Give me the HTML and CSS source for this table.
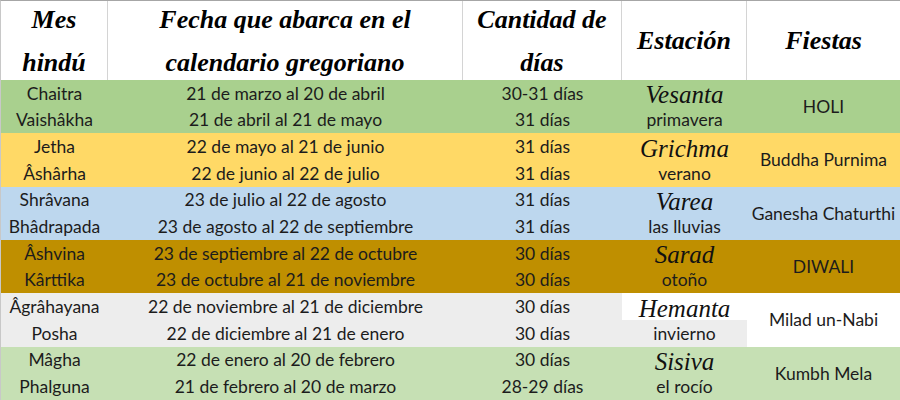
FILE: index.html
```html
<!DOCTYPE html>
<html lang="es">
<head>
<meta charset="utf-8">
<title>Calendario hindú</title>
<link rel="stylesheet" href="styles.css">
</head>
<body>
<div class="table">
  <div class="h">Mes<br>hindú</div>
  <div class="h">Fecha que abarca en el<br>calendario gregoriano</div>
  <div class="h">Cantidad de<br>días</div>
  <div class="h">Estación</div>
  <div class="h last">Fiestas</div>

  <div class="c g1">Chaitra</div><div class="c g1">21 de marzo al 20 de abril</div><div class="c g1">30-31 días</div><div class="c g1 s">Vesanta</div><div class="c g1 f">HOLI</div>
  <div class="c g1">Vaishâkha</div><div class="c g1">21 de abril al 21 de mayo</div><div class="c g1">31 días</div><div class="c g1 sub">primavera</div>

  <div class="c g2">Jetha</div><div class="c g2">22 de mayo al 21 de junio</div><div class="c g2">31 días</div><div class="c g2 s">Grichma</div><div class="c g2 f">Buddha Purnima</div>
  <div class="c g2">Âshârha</div><div class="c g2">22 de junio al 22 de julio</div><div class="c g2">31 días</div><div class="c g2 sub">verano</div>

  <div class="c g3">Shrâvana</div><div class="c g3">23 de julio al 22 de agosto</div><div class="c g3">31 días</div><div class="c g3 s">Varea</div><div class="c g3 f">Ganesha Chaturthi</div>
  <div class="c g3">Bhâdrapada</div><div class="c g3">23 de agosto al 22 de septiembre</div><div class="c g3">31 días</div><div class="c g3 sub">las lluvias</div>

  <div class="c g4">Âshvina</div><div class="c g4">23 de septiembre al 22 de octubre</div><div class="c g4">30 días</div><div class="c g4 s">Sarad</div><div class="c g4 f">DIWALI</div>
  <div class="c g4">Kârttika</div><div class="c g4">23 de octubre al 21 de noviembre</div><div class="c g4">30 días</div><div class="c g4 sub">otoño</div>

  <div class="c g5">Âgrâhayana</div><div class="c g5">22 de noviembre al 21 de diciembre</div><div class="c g5">30 días</div><div class="c white s">Hemanta</div><div class="c white f">Milad un-Nabi</div>
  <div class="c g5">Posha</div><div class="c g5">22 de diciembre al 21 de enero</div><div class="c g5">30 días</div><div class="c g5 sub">invierno</div>

  <div class="c g6">Mâgha</div><div class="c g6">22 de enero al 20 de febrero</div><div class="c g6">30 días</div><div class="c g6 s">Sisiva</div><div class="c g6 f">Kumbh Mela</div>
  <div class="c g6">Phalguna</div><div class="c g6">21 de febrero al 20 de marzo</div><div class="c g6">28-29 días</div><div class="c g6 sub">el rocío</div>
</div>
</body>
</html>
```
FILE: styles.css
```css
html, body {
  margin: 0;
  padding: 0;
  background: #ffffff;
}
.table {
  width: 900px;
  height: 400px;
  box-sizing: border-box;
  border-top: 1px solid #a6a6a6;
  border-left: 1px solid #c8c8c8;
  display: grid;
  grid-template-columns: 107px 355px 159px 125px 153px;
  grid-template-rows: 79px repeat(12, minmax(0, 1fr));
  overflow: hidden;
}
.h {
  font-family: "Liberation Serif", serif;
  font-style: italic;
  font-weight: bold;
  font-size: 26px;
  line-height: 43px;
  color: #000;
  text-align: center;
  display: flex;
  align-items: center;
  justify-content: center;
  border-right: 1px solid #d4d4d4;
  white-space: nowrap;
  min-height: 0;
}
.h.last {
  border-right: none;
}
.c {
  font-family: Lato, "Open Sans", sans-serif;
  font-size: 17.5px;
  line-height: 1;
  color: #1c1c1c;
  display: flex;
  align-items: center;
  justify-content: center;
  white-space: nowrap;
  min-height: 0;
}
.s {
  font-family: "Liberation Serif", serif;
  font-style: italic;
  font-size: 25px;
  color: #111;
  padding-top: 3px;
  box-sizing: border-box;
}
.f {
  grid-row: span 2;
}
.g1 { background: #a9d08e; }
.g2 { background: #ffd966; }
.g3 { background: #bdd7ee; }
.g4 { background: #bf8f00; }
.g5 { background: #ededed; }
.g6 { background: #c6e0b4; }
.white { background: #ffffff; }
```
